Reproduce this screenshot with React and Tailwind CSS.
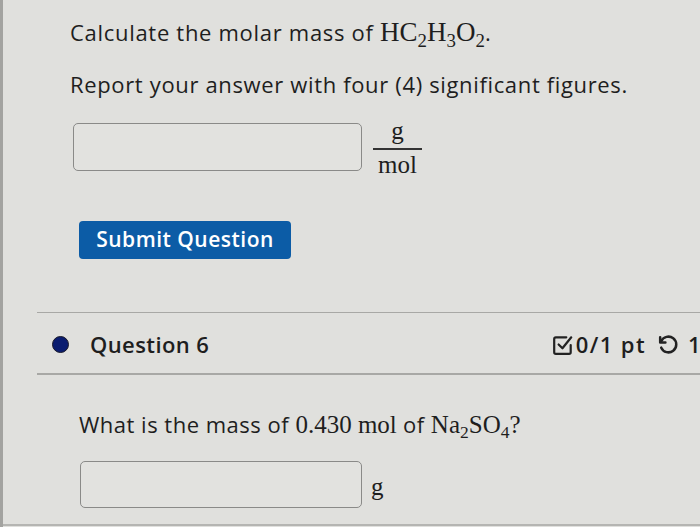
import React from "react";

const sans = { fontFamily: '"Open Sans", "Noto Sans", sans-serif' };
const serif = { fontFamily: '"Liberation Serif", "DejaVu Serif", serif' };

function Sub({ children }) {
  return <span className="text-[0.7em] relative top-[0.3em] leading-none">{children}</span>;
}

export default function App() {
  return (
    <div className="w-[700px] h-[527px] overflow-hidden bg-[#e0e0dd] flex text-[#1e1e1e]" style={sans}>
      <div className="w-[3px] h-full bg-[#a3a3a0]" />
      <div className="flex-1 flex flex-col">
        <div className="pl-[67px] pt-[14px] text-[22px] leading-[36px] tracking-[0.7px]">
          Calculate the molar mass of{" "}
          <span className="text-[27px] tracking-normal" style={serif}>HC<Sub>2</Sub>H<Sub>3</Sub>O<Sub>2</Sub></span>.
        </div>
        <div className="pl-[67px] mt-[18px] text-[22px] leading-[32px] tracking-[0.65px]">
          Report your answer with four (4) significant figures.
        </div>
        <div className="pl-[70px] mt-[18px] flex items-center gap-[11px]">
          <div className="w-[289px] h-[48px] rounded-[5px] border-[1.5px] border-[#8a8a88] bg-[#e2e2df]" />
          <div className="flex flex-col items-center text-[25px] leading-none" style={serif}>
            <span className="pb-[5px]">g</span>
            <span className="w-[49px] h-[1.5px] bg-[#333]" />
            <span className="pt-[2px]">mol</span>
          </div>
        </div>
        <div className="pl-[76px] mt-[44px]">
          <div className="w-[212px] h-[38px] rounded-[4px] bg-[#0c5ca6] text-white text-[21px] font-semibold flex items-center justify-center tracking-[0.5px]">
            Submit Question
          </div>
        </div>
        <div className="ml-[34px] mt-[53px] h-[1.5px] bg-[#a8a8a5]" />
        <div className="ml-[49px] h-[60px] flex items-center pt-[3px]">
          <span className="w-[17px] h-[17px] rounded-full bg-[#0a1c70] border border-[#1a1a2a]" />
          <span className="ml-[21px] text-[22px] font-semibold tracking-[0.4px]">Question 6</span>
          <div className="ml-auto mr-[-12px] flex items-center text-[22px] font-semibold tracking-[1.4px] whitespace-nowrap">
            <svg width="22" height="22" viewBox="0 0 20 20" fill="none" stroke="#222" strokeWidth="2" strokeLinecap="round" strokeLinejoin="round">
              <path d="M17 10v6.5a1.5 1.5 0 0 1-1.5 1.5h-12A1.5 1.5 0 0 1 2 16.5v-12A1.5 1.5 0 0 1 3.5 3H13" />
              <path d="M6 9.5l3.5 3.5 8-10" />
            </svg>
            <span className="ml-[2px]">0/1 pt</span>
            <svg className="ml-[10px]" width="23" height="21" viewBox="0 0 22 20" fill="none" stroke="#222" strokeWidth="2.4" strokeLinecap="round" strokeLinejoin="round">
              <path d="M5 7a7.5 7.5 0 1 1 0 6" />
              <path d="M4 3v5h5" />
            </svg>
            <span className="ml-[9px] w-[24px]">1</span>
          </div>
        </div>
        <div className="ml-[34px] h-[1.5px] bg-[#a8a8a5]" />
        <div className="pl-[76px] mt-[33px] text-[22px] leading-[32px] tracking-[0.5px]">
          What is the mass of{" "}
          <span className="text-[25px] tracking-normal" style={serif}>0.430 mol</span> of{" "}
          <span className="text-[25px] tracking-normal" style={serif}>Na<Sub>2</Sub>SO<Sub>4</Sub>?</span>
        </div>
        <div className="pl-[77px] mt-[20px] flex items-center gap-[9px]">
          <div className="w-[282px] h-[47px] rounded-[5px] border-[1.5px] border-[#8a8a88] bg-[#e2e2df]" />
          <span className="text-[25px] leading-none mt-[4px]" style={serif}>g</span>
        </div>
        <div className="mt-[16px] h-[2px] bg-[#b5b5b2]" />
      </div>
    </div>
  );
}
